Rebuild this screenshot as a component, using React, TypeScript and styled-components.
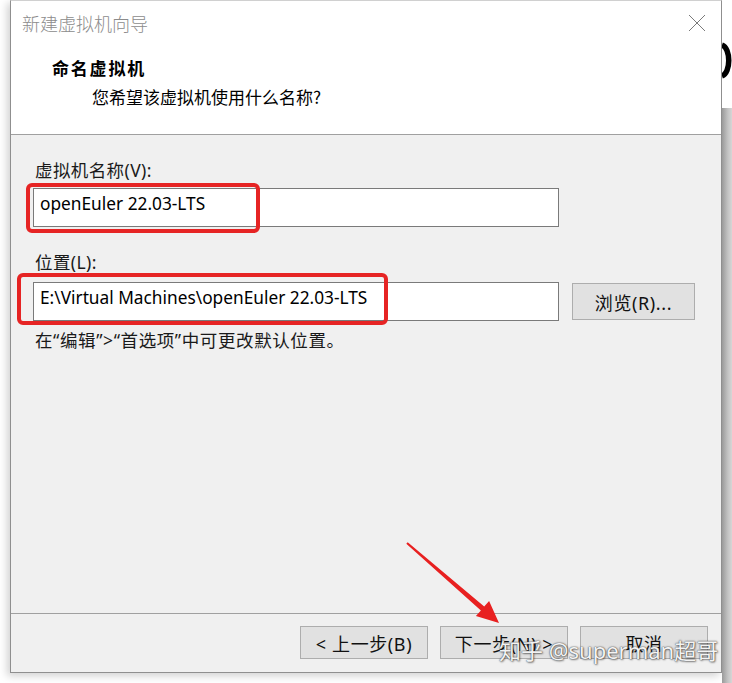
import React from "react";
import styled, { createGlobalStyle } from "styled-components";

const Global = createGlobalStyle`
  html, body { margin: 0; padding: 0; background: #ffffff; overflow: hidden; }
  * { box-sizing: border-box; }
`;

const CJK = `"Noto Sans CJK SC", sans-serif`;
const UI = `"Noto Sans", "Noto Sans CJK SC", sans-serif`;

const Page = styled.div`
  position: relative;
  width: 732px;
  height: 683px;
  display: flex;
  align-items: flex-start;
  padding-left: 10px;
  background: #ffffff;
`;

const Dialog = styled.div`
  width: 712px;
  height: 673px;
  display: flex;
  flex-direction: column;
  border: 1px solid #8f8f8f;
  border-top-color: #d0d0d0;
  background: #f0f0f0;
  box-shadow: -3px 3px 8px rgba(0, 0, 0, 0.18);
`;

const Header = styled.div`
  height: 134px;
  background: #ffffff;
  border-bottom: 1px solid #a0a0a0;
  display: flex;
  flex-direction: column;
`;

const TitleRow = styled.div`
  height: 44px;
  display: flex;
  align-items: center;
  justify-content: space-between;
  padding-left: 11px;
  padding-right: 15px;
`;

const Title = styled.div`
  font-family: ${CJK};
  font-size: 18px;
  color: #8c8c8c;
  line-height: 1;
  font-weight: 300;
`;

const CloseBtn = styled.div`
  width: 18px;
  height: 18px;
  display: flex;
  align-items: center;
  justify-content: center;
  margin-top: -1px;
`;

const Heading = styled.div`
  font-family: ${CJK};
  font-size: 17px;
  font-weight: 700;
  letter-spacing: 1.8px;
  line-height: 24px;
  color: #000;
  margin-top: 11px;
  padding-left: 41px;
`;

const SubHeading = styled.div`
  font-family: ${CJK};
  font-size: 17px;
  line-height: 24px;
  color: #000;
  margin-top: 5px;
  padding-left: 81px;
`;

const Body = styled.div`
  height: 479px;
  border-bottom: 1px solid #a0a0a0;
  padding: 23px 0 0 22px;
  display: flex;
  flex-direction: column;
`;

const Label = styled.div<{ $gap: number; $top?: number }>`
  font-family: ${UI};
  font-size: 17.5px;
  line-height: 24px;
  letter-spacing: 0.4px;
  color: #1a1a1a;
  padding-left: 2px;
  margin-top: ${(p) => p.$top ?? 0}px;
  margin-bottom: ${(p) => p.$gap}px;
`;

const FieldRow = styled.div`
  display: flex;
  align-items: center;
  gap: 13px;
`;

const InputWrap = styled.div`
  position: relative;
  width: 526px;
  height: 39px;
`;

const Input = styled.div<{ $lift: number }>`
  width: 100%;
  height: 100%;
  background: #ffffff;
  border: 1px solid #7a7a7a;
  display: flex;
  align-items: center;
  padding-left: 6px;
  padding-bottom: ${(p) => p.$lift}px;
  font-family: ${UI};
  font-size: 17.3px;
  color: #000;
`;

const Highlight = styled.div<{ $l: number; $t: number; $w: number; $h: number }>`
  position: absolute;
  left: ${(p) => p.$l}px;
  top: ${(p) => p.$t}px;
  width: ${(p) => p.$w}px;
  height: ${(p) => p.$h}px;
  border: 4.5px solid #e62424;
  border-radius: 6px;
  pointer-events: none;
`;

const Button = styled.div<{ $w: number; $h: number }>`
  width: ${(p) => p.$w}px;
  height: ${(p) => p.$h}px;
  background: #e1e1e1;
  border: 1px solid #adadad;
  display: flex;
  align-items: center;
  justify-content: center;
  font-family: ${UI};
  font-size: 18px;
  letter-spacing: 0.6px;
  color: #111;
`;

const Hint = styled.div`
  font-family: ${UI};
  font-size: 17.5px;
  line-height: 24px;
  letter-spacing: 0.6px;
  color: #1a1a1a;
  margin-top: 7px;
  padding-left: 2px;
`;

const Footer = styled.div`
  flex: 1;
  display: flex;
  align-items: center;
  justify-content: flex-end;
  gap: 12px;
  padding-right: 13px;
  padding-bottom: 1px;
`;

const SideStrip = styled.div`
  width: 10px;
  height: 683px;
  display: flex;
  flex-direction: column;
`;

const SideTop = styled.div`
  height: 108px;
  background: #ffffff;
  padding-top: 42px;
`;

const SideGrey = styled.div`
  flex: 1;
  background: linear-gradient(to right, #9a9a9a, #c4c4c4 60%, #d6d6d6);
`;

const ArrowLayer = styled.svg`
  position: absolute;
  left: 0;
  top: 0;
  pointer-events: none;
`;

const Watermark = styled.div`
  position: absolute;
  left: 499px;
  top: 636px;
  font-family: ${UI};
  font-size: 22px;
  line-height: 28px;
  color: rgba(255, 255, 255, 0.95);
  text-shadow: 0 0 1px rgba(60, 60, 60, 0.9), 0 0 2px rgba(60, 60, 60, 0.7),
    1px 1px 2px rgba(0, 0, 0, 0.4);
  white-space: nowrap;
  pointer-events: none;
`;

export default function App() {
  return (
    <>
      <Global />
      <Page>
        <Dialog>
          <Header>
            <TitleRow>
              <Title>新建虚拟机向导</Title>
              <CloseBtn>
                <svg width="18" height="18" viewBox="0 0 18 18">
                  <path d="M1 1 L17 17 M17 1 L1 17" stroke="#7a7a7a" strokeWidth="1" fill="none" />
                </svg>
              </CloseBtn>
            </TitleRow>
            <Heading>命名虚拟机</Heading>
            <SubHeading>您希望该虚拟机使用什么名称?</SubHeading>
          </Header>
          <Body>
            <Label $gap={6}>虚拟机名称(V):</Label>
            <FieldRow>
              <InputWrap>
                <Input $lift={9}>openEuler 22.03-LTS</Input>
                <Highlight $l={-7} $t={-5} $w={234} $h={50} />
              </InputWrap>
            </FieldRow>
            <Label $gap={8} $top={23}>位置(L):</Label>
            <FieldRow>
              <InputWrap>
                <Input $lift={8}>E:\Virtual Machines\openEuler 22.03-LTS</Input>
                <Highlight $l={-16} $t={-9} $w={371} $h={52} />
              </InputWrap>
              <Button $w={123} $h={37}>浏览(R)...</Button>
            </FieldRow>
            <Hint>在“编辑”&gt;“首选项”中可更改默认位置。</Hint>
          </Body>
          <Footer>
            <Button $w={128} $h={33}>&lt; 上一步(B)</Button>
            <Button $w={128} $h={33}>下一步(N) &gt;</Button>
            <Button $w={128} $h={33}>取消</Button>
          </Footer>
        </Dialog>
        <SideStrip>
          <SideTop>
            <svg width="10" height="40" viewBox="0 0 10 40">
              <path d="M0 3 C9 6 9 31 0 34" stroke="#000" strokeWidth="5.5" fill="none" />
            </svg>
          </SideTop>
          <SideGrey />
        </SideStrip>
        <ArrowLayer width="732" height="683" viewBox="0 0 732 683">
          <polygon
            points="407.7,542.2 484.2,606.6 489.1,601 499,623 475.9,616 480.9,610.4 406.3,543.8"
            fill="#e82020"
          />
        </ArrowLayer>
        <Watermark>知乎 @superman超哥</Watermark>
      </Page>
    </>
  );
}
